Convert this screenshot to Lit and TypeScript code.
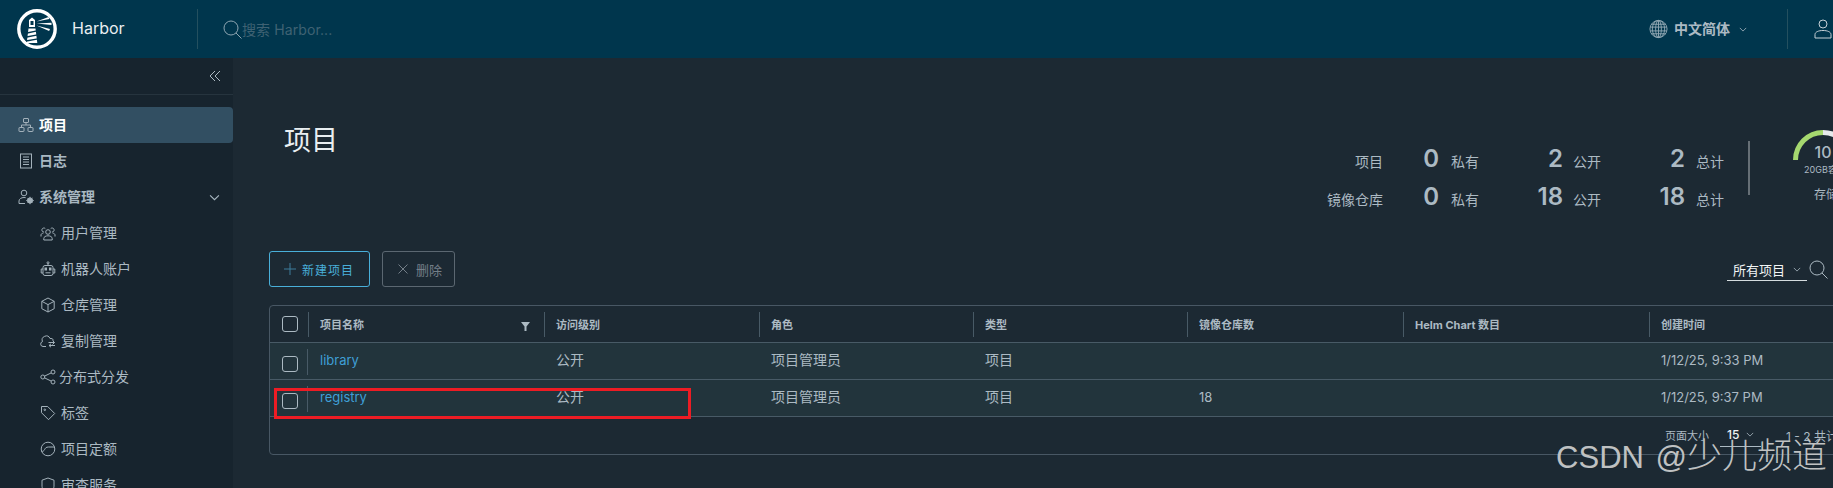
import { LitElement, html, css, svg } from 'lit';
import { customElement } from 'lit/decorators.js';

const icons: Record<string, unknown> = {
  project: svg`<rect x="5.5" y="1.5" width="5" height="4" rx=".5"/><rect x="1" y="10.5" width="5" height="4" rx=".5"/><rect x="10" y="10.5" width="5" height="4" rx=".5"/><path d="M8 5.5V8M3.5 10.5V8h9v2.5"/>`,
  log: svg`<rect x="2.5" y="1" width="11" height="14"/><path d="M5 4h6M5 6.5h6M5 9h6M5 11.5h6"/>`,
  admin: svg`<circle cx="6" cy="4" r="2.8"/><path d="M1 14.5v-2.5c0-2 2.200-3.500 5-3.500.6 0 1.200.1 1.700.2M1 14.500h6"/><circle cx="12" cy="11.500" r="2.600" fill="currentColor"/><path d="M12 7.800v1.200M12 14v1.200M8.300 11.500h1.200M14.500 11.500h1.200M9.500 9l.8.8M13.700 13.200l.8.8M14.500 9l-.8.8M10.300 13.200l-.8.8"/>`,
  users: svg`<circle cx="8" cy="7" r="2.300"/><path d="M3.800 15v-1.500c0-1.700 1.900-2.700 4.200-2.700s4.200 1 4.200 2.700V15z"/><path d="M5.300 3.600a2 2 0 1 0-1.200 3.400M10.700 3.600a2 2 0 1 1 1.200 3.400M1 11.500V10c0-1 .9-1.700 2.400-1.900M15 11.500V10c0-1-.9-1.700-2.400-1.900"/>`,
  robot: svg`<circle cx="8" cy="1.800" r="1"/><path d="M8 2.800v1.700"/><rect x="3" y="4.500" width="10" height="10" rx="2"/><path d="M3 8H1.200v4H3M13 8h1.800v4H13M5.500 11.800h5"/><rect x="5" y="7" width="1.500" height="2" fill="currentColor"/><rect x="9.500" y="7" width="1.500" height="2" fill="currentColor"/>`,
  box: svg`<path d="M8 1l6.200 3.300v7.400L8 15l-6.200-3.300V4.300zM1.800 4.300L8 7.600l6.200-3.300M8 7.600V15"/>`,
  cloud: svg`<path d="M6 13.500H3a2.500 2.500 0 0 1-.5-4.900A4 4 0 0 1 10 5.500a3 3 0 0 1 3.600 2M8.500 9.500h6M12.500 7.500l2 2-2 2M15 12.500H9M11 10.800l-2 1.700 2 1.700"/>`,
  share: svg`<circle cx="2.800" cy="8" r="2"/><circle cx="13" cy="3" r="2"/><circle cx="13" cy="13" r="2"/><path d="M4.600 7.100l6.600-3.200M4.600 8.900l6.600 3.200"/>`,
  tag: svg`<path d="M1.500 1.500h6.200l7 7-6.200 6.200-7-7z"/><circle cx="4.800" cy="4.800" r=".8"/>`,
  quota: svg`<circle cx="8" cy="8" r="6.800"/><path d="M1.500 10.500c1.500 0 2.300-.5 3-1.800C5.200 7.300 6 6 8.500 6h6"/>`,
  shield: svg`<path d="M8 1l6 2.200v6c0 3-3 5-6 6-3-1-6-3-6-6v-6z"/>`,
};

const nav = [
  { icon: 'project', label: '项目', top: true, active: true },
  { icon: 'log', label: '日志', top: true },
  { icon: 'admin', label: '系统管理', top: true, open: true },
  { icon: 'users', label: '用户管理' },
  { icon: 'robot', label: '机器人账户' },
  { icon: 'box', label: '仓库管理' },
  { icon: 'cloud', label: '复制管理' },
  { icon: 'share', label: '分布式分发', tight: true },
  { icon: 'tag', label: '标签' },
  { icon: 'quota', label: '项目定额' },
  { icon: 'shield', label: '审查服务' },
];

const columns = ['项目名称', '访问级别', '角色', '类型', '镜像仓库数', 'Helm Chart 数目', '创建时间'];

const rows = [
  { name: 'library', access: '公开', role: '项目管理员', type: '项目', repos: '', charts: '', time: '1/12/25, 9:33 PM' },
  { name: 'registry', access: '公开', role: '项目管理员', type: '项目', repos: '18', charts: '', time: '1/12/25, 9:37 PM' },
];

const stats = [
  ['项目', '0', '2', '2'],
  ['镜像仓库', '0', '18', '18'],
];

const chevron = html`<svg class="chev" viewBox="0 0 10 6"><path d="M1 1l4 4 4-4"/></svg>`;

@customElement('app-root')
export class AppRoot extends LitElement {
  static styles = css`
    :host {
      display: block;
      position: relative;
      width: 1833px;
      height: 488px;
      overflow: hidden;
      background: #1c2933;
      color: #acbac3;
      font-family: Inter, 'Noto Sans CJK SC', sans-serif;
      font-size: 14px;
    }
    svg {
      display: block;
      fill: none;
      stroke: currentColor;
      stroke-width: 1;
      flex: none;
    }
    .chev {
      width: 10px;
      height: 6px;
    }

    header {
      display: flex;
      align-items: center;
      height: 58px;
      padding: 0 1px 0 17px;
      background: #00364d;
      box-sizing: border-box;
    }
    .logo {
      width: 40px;
      height: 40px;
      color: #fff;
    }
    .brand {
      margin: -2px 0 0 15px;
      width: 125px;
      font-size: 16px;
      color: #e9eef1;
    }
    .vline {
      width: 1px;
      height: 40px;
      background: #24505f;
    }
    .search-icon {
      margin-left: 25px;
      width: 19px;
      height: 19px;
      color: #8fa6b2;
    }
    .placeholder {
      margin-top: -1px;
      color: #3f6273;
      letter-spacing: 0.1px;
    }
    .lang {
      margin-left: auto;
      display: flex;
      align-items: center;
      color: #acbac3;
    }
    .globe {
      width: 19px;
      height: 20px;
      color: #8fa6b2;
    }
    .lang-name {
      margin: -2px 0 0 6px;
      font-weight: 700;
    }
    .lang .chev {
      margin-left: 9px;
      width: 8px;
      height: 5px;
    }
    .lang + .vline {
      margin-left: 40px;
    }
    .user {
      margin-left: 26px;
      width: 18px;
      height: 20px;
      color: #c6d0d6;
    }

    .body {
      display: flex;
      height: 430px;
    }
    aside {
      flex: none;
      width: 233px;
      background: #17242e;
      overflow: hidden;
    }
    .collapse {
      display: flex;
      justify-content: flex-end;
      align-items: center;
      height: 37px;
      padding-right: 12px;
      box-sizing: border-box;
      border-bottom: 1px solid #26343e;
      margin-bottom: 12px;
    }
    .collapse svg {
      width: 12px;
      height: 12px;
    }
    .item {
      display: flex;
      align-items: center;
      height: 36px;
      padding-left: 40px;
      box-sizing: border-box;
      gap: 5px;
      white-space: nowrap;
    }
    .item span {
      margin-top: -2px;
    }
    .item svg.nav-icon {
      width: 16px;
      height: 16px;
      color: #a3b1ba;
    }
    .item.tight {
      gap: 3px;
    }
    .item.top {
      padding-left: 18px;
      gap: 5px;
      font-weight: 700;
      color: #a9b8c2;
    }
    .item.active {
      background: #324f62;
      border-radius: 0 4px 4px 0;
      color: #fff;
    }
    .item .chev {
      margin-left: auto;
      margin-right: 13px;
      width: 11px;
      height: 7px;
    }

    main {
      flex: 1;
      min-width: 0;
      overflow: hidden;
      padding-left: 36px;
    }
    .top-row {
      display: flex;
      align-items: flex-start;
      height: 193px;
    }
    h1 {
      flex: none;
      width: 1016px;
      margin: 63px 0 0 15px;
      box-sizing: border-box;
      font-size: 27px;
      font-weight: 400;
      line-height: 40px;
      color: #e9eef1;
    }
    .stats {
      flex: none;
      display: grid;
      grid-template-columns: 83px 56px 99px 25px 97px 25px 38px;
      grid-auto-rows: 38px;
      margin-top: 82px;
      align-items: baseline;
      white-space: nowrap;
    }
    .stats .label {
      text-align: right;
      font-size: 14px;
    }
    .stats .num {
      justify-self: end;
      font-size: 24px;
      font-weight: 600;
      line-height: 38px;
    }
    .stats .unit {
      font-size: 14px;
    }
    .u1 {
      padding-left: 12px;
    }
    .u2 {
      padding-left: 10px;
    }
    .u3 {
      padding-left: 11px;
    }
    .stats-line {
      flex: none;
      width: 2px;
      height: 54px;
      margin: 83px 0 0 25px;
      background: #666f76;
    }
    .gauge {
      flex: none;
      position: relative;
      width: 60px;
      height: 80px;
      margin: 72px 0 0 43px;
      padding-top: 11px;
      box-sizing: border-box;
      display: flex;
      flex-direction: column;
      align-items: center;
      white-space: nowrap;
    }
    .gauge svg {
      position: absolute;
      left: 0;
      top: 0;
      width: 60px;
      height: 30px;
    }
    .gauge .pct {
      font-size: 16px;
      font-weight: 500;
      line-height: 22px;
    }
    .gauge .cap {
      margin-top: 1px;
      font-size: 9px;
      line-height: 12px;
      padding-left: 4px;
    }
    .gauge .name {
      margin-top: 11px;
      font-size: 12px;
      line-height: 16px;
      padding-left: 6px;
    }

    .toolbar {
      display: flex;
      align-items: flex-start;
      gap: 12px;
      height: 54px;
      padding-right: 5px;
    }
    button {
      display: flex;
      align-items: center;
      height: 36px;
      margin: 0;
      padding: 0;
      box-sizing: border-box;
      background: none;
      border-radius: 3px;
      font: inherit;
      font-size: 13px;
    }
    button svg {
      width: 12px;
      height: 12px;
    }
    .add {
      width: 101px;
      padding-left: 14px;
      gap: 6px;
      border: 1px solid #49afd9;
      color: #49afd9;
      font-size: 12px;
      letter-spacing: 1px;
    }
    .add svg {
      color: #3d7d9c;
    }
    .del {
      width: 73px;
      padding-left: 14px;
      gap: 7px;
      border: 1px solid #5b6771;
      color: #747f88;
    }
    .filter {
      margin-left: auto;
      margin-top: 7px;
      width: 80px;
      height: 23px;
      padding-left: 6px;
      box-sizing: border-box;
      display: flex;
      align-items: center;
      gap: 8px;
      border-bottom: 1px solid #d5dcdf;
      color: #f2f5f6;
      font-size: 13px;
    }
    .filter .chev {
      width: 8px;
      height: 5px;
      color: #acbac3;
    }
    .find {
      width: 19px;
      height: 19px;
      margin: 9px 0 0 -10px;
      color: #acbac3;
    }

    .table {
      width: 1620px;
      height: 150px;
      box-sizing: border-box;
      border: 1px solid #485764;
      border-radius: 4px;
    }
    .grid {
      display: grid;
      grid-template-columns: 38px 236px 215px 214px 214px 216px 246px 240px;
      align-items: center;
      border-bottom: 1px solid #485a66;
      box-sizing: border-box;
    }
    .head {
      height: 37px;
      font-size: 11px;
      font-weight: 700;
    }
    .row {
      height: 37px;
      background: #22343c;
    }
    .row:last-of-type {
      height: 38px;
      border-bottom-width: 2px;
    }
    .box {
      display: block;
      width: 16px;
      height: 16px;
      box-sizing: border-box;
      border: 1px solid #acbac3;
      border-radius: 3px;
      margin-left: 12px;
    }
    .head .box {
      margin-top: -1px;
    }
    .row .check {
      height: 26px;
      padding-top: 7px;
      margin-top: 1px;
      box-sizing: border-box;
      border-right: 1px solid #485a66;
    }
    .hcell {
      display: flex;
      align-items: center;
      justify-content: space-between;
      height: 25px;
      padding: 0 14px 0 11px;
      border-left: 1px solid #485a66;
      white-space: nowrap;
    }
    .hcell svg {
      width: 9px;
      height: 9px;
      margin-top: 4px;
      fill: #acbac3;
      stroke: none;
    }
    .cell {
      padding-left: 12px;
      white-space: nowrap;
      line-height: 20px;
      margin-top: -3px;
    }
    .num-cell,
    .time {
      font-size: 13px;
    }
    .name-cell {
      font-size: 13px;
      color: #3f9fd6;
    }
    .pager {
      display: flex;
      align-items: center;
      height: 36px;
      padding-left: 1395px;
      font-size: 11px;
      white-space: nowrap;
    }
    .size {
      display: flex;
      align-items: center;
      box-sizing: border-box;
      width: 42px;
      height: 24px;
      margin-left: 11px;
      padding-left: 7px;
      border-bottom: 1px solid #acbac3;
      color: #eef2f4;
      font-size: 12px;
      font-weight: 500;
    }
    .size .chev {
      margin-left: 7px;
      width: 8px;
      height: 5px;
      color: #acbac3;
    }
    .count {
      margin-left: 25px;
      font-size: 12px;
    }

    .mark {
      position: absolute;
      right: 6px;
      top: 432px;
      font-family: 'Liberation Sans', sans-serif;
      font-size: 31px;
      line-height: 42px;
      word-spacing: 3px;
      color: #bfc1c2;
      white-space: nowrap;
    }
    .mark span {
      font-family: 'Noto Sans CJK SC', sans-serif;
      font-size: 35px;
      font-weight: 300;
    }
    .redbox {
      position: absolute;
      left: 274px;
      top: 388px;
      width: 417px;
      height: 31px;
      box-sizing: border-box;
      border: 3px solid #ed1c24;
    }
  `;

  private renderLogo() {
    return html`<svg class="logo" viewBox="0 0 40 40">
      <circle cx="20" cy="20" r="18.200" stroke-width="3.400" />
      <path fill="currentColor" stroke="none" d="M12 11l3-2.500 3 2.500v7h-6zM11.500 19.500h7l1.800 14.500H9.700z" />
      <path stroke="#00364d" stroke-width="1.300" d="M10 24l10-2.200M9.600 28l11-2.200M9 32l12-2.200" />
      <rect x="13.500" y="12" width="3" height="4" fill="#00364d" stroke="none" />
      <path fill="currentColor" stroke="none" d="M19.500 12.500l12-4.500.9 2zM19.500 14.500l15-.8v2.200zM19.500 16.500l13.500 3.500-.9 2z" />
    </svg>`;
  }

  private renderNavItem(item: (typeof nav)[number]) {
    const cls = ['item', item.top ? 'top' : '', item.active ? 'active' : '', item.tight ? 'tight' : ''].join(' ');
    return html`<div class=${cls}>
      <svg class="nav-icon" viewBox="0 0 16 16">${icons[item.icon]}</svg>
      <span>${item.label}</span>
      ${item.open ? chevron : ''}
    </div>`;
  }

  render() {
    return html`
      <header>
        ${this.renderLogo()}
        <div class="brand">Harbor</div>
        <div class="vline"></div>
        <svg class="search-icon" viewBox="0 0 19 19"><circle cx="8" cy="8" r="7" /><path d="M13 13l5.500 5.500" /></svg>
        <div class="placeholder">搜索 Harbor...</div>
        <div class="lang">
          <svg class="globe" viewBox="0 0 20 20">
            <circle cx="10" cy="10" r="9" />
            <ellipse cx="10" cy="10" rx="3" ry="9" />
            <ellipse cx="10" cy="10" rx="6.500" ry="9" />
            <path d="M10 1v18M2.500 5h15M1.500 8h17M1.500 12h17M2.500 15h15" />
          </svg>
          <span class="lang-name">中文简体</span>
          ${chevron}
        </div>
        <div class="vline"></div>
        <svg class="user" viewBox="0 0 18 20">
          <circle cx="9" cy="5" r="4" />
          <path d="M1 19v-3.500c0-2.500 3.500-4 8-4s8 1.500 8 4V19z" />
        </svg>
      </header>
      <div class="body">
        <aside>
          <div class="collapse">
            <svg viewBox="0 0 12 12"><path d="M6 1L1 6l5 5M11 1L6 6l5 5" /></svg>
          </div>
          ${nav.map((item) => this.renderNavItem(item))}
        </aside>
        <main>
          <div class="top-row">
            <h1>项目</h1>
            <div class="stats">
              ${stats.map(
                ([label, priv, pub, total]) => html`
                  <span class="label">${label}</span>
                  <span class="num">${priv}</span><span class="unit u1">私有</span>
                  <span class="num">${pub}</span><span class="unit u2">公开</span>
                  <span class="num">${total}</span><span class="unit u3">总计</span>
                `,
              )}
            </div>
            <div class="stats-line"></div>
            <div class="gauge">
              <svg viewBox="0 0 60 30">
                <path d="M2.500 30A27.500 27.500 0 0 1 30 2.500" stroke="#a5d86f" stroke-width="5" />
                <path d="M30 2.500A27.500 27.500 0 0 1 57.500 30" stroke="#e6e9eb" stroke-width="5" />
              </svg>
              <span class="pct">10</span>
              <span class="cap">20GB容量</span>
              <span class="name">存储</span>
            </div>
          </div>
          <div class="toolbar">
            <button class="add">
              <svg viewBox="0 0 12 12"><path d="M6 0v12M0 6h12" /></svg>
              新建项目
            </button>
            <button class="del">
              <svg viewBox="0 0 12 12"><path d="M1.500 1.500l9 9M10.500 1.500l-9 9" /></svg>
              删除
            </button>
            <div class="filter">所有项目 ${chevron}</div>
            <svg class="find" viewBox="0 0 19 19"><circle cx="8" cy="8" r="7" /><path d="M13 13l5.500 5.500" /></svg>
          </div>
          <div class="table">
            <div class="grid head">
              <span class="box"></span>
              ${columns.map(
                (c, i) => html`<div class="hcell">
                  <span>${c}</span>
                  ${i === 0 ? html`<svg viewBox="0 0 9 9"><path d="M0 0h9L5.500 4.500V9h-2V4.500z" /></svg>` : ''}
                </div>`,
              )}
            </div>
            ${rows.map(
              (r) => html`<div class="grid row">
                <div class="check"><span class="box"></span></div>
                <span class="cell name-cell">${r.name}</span>
                <span class="cell">${r.access}</span>
                <span class="cell">${r.role}</span>
                <span class="cell">${r.type}</span>
                <span class="cell num-cell">${r.repos}</span>
                <span class="cell">${r.charts}</span>
                <span class="cell time">${r.time}</span>
              </div>`,
            )}
            <div class="pager">
              <span>页面大小</span>
              <span class="size">15 ${chevron}</span>
              <span class="count">1 - 2 共计 2 条记录</span>
            </div>
          </div>
        </main>
      </div>
      <div class="redbox"></div>
      <div class="mark">CSDN @<span>少儿频道</span></div>
    `;
  }
}
